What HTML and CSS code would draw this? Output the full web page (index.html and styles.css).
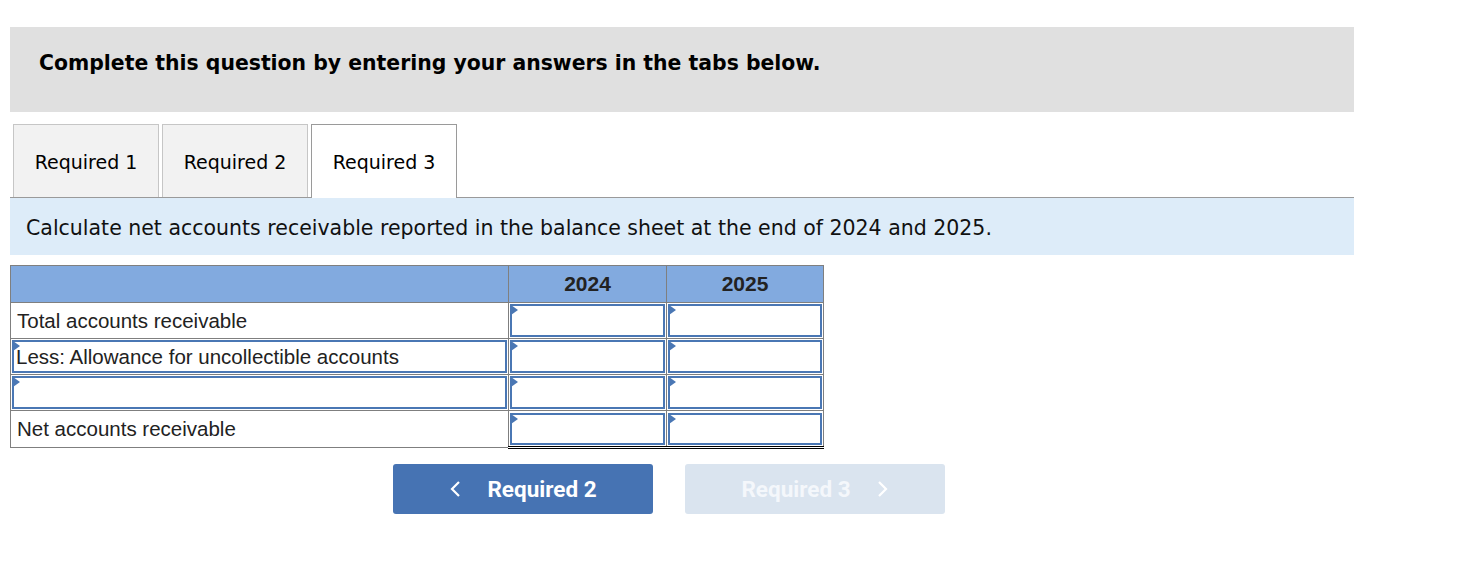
FILE: index.html
```html
<!DOCTYPE html>
<html>
<head>
<meta charset="utf-8">
<link rel="stylesheet" href="styles.css">
</head>
<body>
<div class="wrap">
  <div class="banner">Complete this question by entering your answers in the tabs below.</div>
  <div class="tabs">
    <div class="tab">Required 1</div>
    <div class="tab">Required 2</div>
    <div class="tab active">Required 3</div>
  </div>
  <div class="instr">Calculate net accounts receivable reported in the balance sheet at the end of 2024 and 2025.</div>
  <table class="grid">
    <tr class="head">
      <th class="lab"></th>
      <th class="num">2024</th>
      <th class="num">2025</th>
    </tr>
    <tr>
      <td class="lab"><div class="plain">Total accounts receivable</div></td>
      <td><div class="inp"><span class="tri"></span></div></td>
      <td><div class="inp"><span class="tri"></span></div></td>
    </tr>
    <tr>
      <td class="lab"><div class="inp labinp"><span class="tri"></span>Less: Allowance for uncollectible accounts</div></td>
      <td><div class="inp"><span class="tri"></span></div></td>
      <td><div class="inp"><span class="tri"></span></div></td>
    </tr>
    <tr>
      <td class="lab"><div class="inp labinp"><span class="tri"></span></div></td>
      <td><div class="inp"><span class="tri"></span></div></td>
      <td><div class="inp"><span class="tri"></span></div></td>
    </tr>
    <tr class="total">
      <td class="lab"><div class="plain">Net accounts receivable</div></td>
      <td class="tot"><div class="inp"><span class="tri"></span></div></td>
      <td class="tot"><div class="inp"><span class="tri"></span></div></td>
    </tr>
  </table>
  <div class="nav">
    <div class="btn prev">
      <svg width="14" height="20" viewBox="0 0 14 20"><polyline points="10,3 3,10 10,17" fill="none" stroke="#fff" stroke-width="2.2"/></svg>
      <span>Required 2</span>
    </div>
    <div class="btn next">
      <span>Required 3</span>
      <svg width="14" height="20" viewBox="0 0 14 20"><polyline points="4,3 11,10 4,17" fill="none" stroke="#fff" stroke-width="2.2"/></svg>
    </div>
  </div>
</div>
</body>
</html>
```

FILE: styles.css
```css
html, body {
  margin: 0;
  padding: 0;
  background: #fff;
}
.wrap {
  width: 1344px;
  padding: 27px 0 0 10px;
}
.banner {
  background: #e0e0e0;
  height: 85px;
  box-sizing: border-box;
  padding: 24px 0 0 29px;
  font-family: "DejaVu Sans", Verdana, sans-serif;
  font-weight: bold;
  font-size: 20.4px;
  color: #000;
}
.tabs {
  display: flex;
  gap: 3px;
  margin-top: 12px;
  padding-left: 3px;
  border-bottom: 1px solid #9a9a9a;
  height: 73px;
}
.tab {
  width: 146px;
  height: 73px;
  box-sizing: border-box;
  border: 1px solid #c6c6c6;
  border-bottom: none;
  background: #f2f2f2;
  display: flex;
  align-items: center;
  justify-content: center;
  padding-top: 2px;
  font-family: "DejaVu Sans", Verdana, sans-serif;
  font-size: 19px;
  color: #000;
}
.tab.active {
  background: #fff;
  border-color: #9a9a9a;
  height: 74px;
  padding-top: 1px;
  position: relative;
  z-index: 1;
}
.instr {
  background: #ddecf9;
  height: 57px;
  box-sizing: border-box;
  padding: 18px 0 0 16px;
  font-family: "DejaVu Sans", Verdana, sans-serif;
  font-size: 20.5px;
  color: #111;
}
.grid {
  margin-top: 10px;
  border-collapse: collapse;
  border: 1px solid #7f7f7f;
  font-family: "Liberation Sans", Arial, sans-serif;
  font-size: 20.5px;
  color: #222;
}
.grid td, .grid th {
  border: 1px solid #7f7f7f;
  padding: 0;
  height: 35px;
  vertical-align: middle;
}
.grid th.lab, .grid td.lab { width: 497px; }
.grid th.num, .grid td:not(.lab) { width: 157px; }
.grid th.num:last-child, .grid td:last-child:not(.lab) { width: 156px; }
.grid tr.head th {
  background: #82aadf;
  height: 36px;
  font-weight: bold;
  font-size: 21px;
  color: #222;
  text-align: center;
}
.plain {
  padding-left: 6px;
  line-height: 34px;
}
.inp {
  position: relative;
  margin: 1px;
  border: 2px solid #4a77b4;
  height: 29px;
  box-sizing: content-box;
  background: #fff;
  line-height: 29px;
  padding-left: 2px;
  white-space: nowrap;
}
.tri {
  position: absolute;
  left: -1px;
  top: -1px;
  width: 0;
  height: 0;
  border-top: 5px solid transparent;
  border-bottom: 5px solid transparent;
  border-left: 7px solid #4a77b4;
}
.grid td.tot {
  border-top: 1px solid #000;
  border-bottom: 3px double #000;
}
.grid td.tot .inp {
  height: 28px;
}
.nav {
  display: flex;
  gap: 32px;
  margin-top: 15px;
  padding-left: 383px;
}
.btn {
  width: 260px;
  height: 50px;
  border-radius: 3px;
  display: flex;
  align-items: center;
  justify-content: center;
  gap: 24px;
  font-family: Roboto, "Liberation Sans", sans-serif;
  font-weight: bold;
  font-size: 22.5px;
  color: #fff;
}
.btn.prev { background: #4673b3; }
.btn.next { background: #dae4ef; color: #f4f7fb; }
```
